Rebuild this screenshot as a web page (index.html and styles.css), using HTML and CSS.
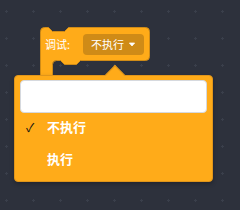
FILE: index.html
```html
<!DOCTYPE html>
<html lang="zh">
<head>
    <meta charset="UTF-8">
    <meta name="viewport" content="width=device-width, initial-scale=1.0">
    <title>调试</title>
    <link rel="stylesheet" href="styles.css">
</head>
<body>
    <div class="workspace">
        <!-- Control block (C-shaped) -->
        <div class="block">
            <svg class="block-shape" width="112" height="52" viewBox="0 0 112 52">
                <path d="M0.5,4.5 A4,4 0 0 1 4.5,0.5 H8.5 L12.5,4.5 H24.5 L28.5,0.5 H105.5 A4,4 0 0 1 109.5,4.5 V29.5 A4,4 0 0 1 105.5,33.5 H40.5 L36.5,37.5 H24.5 L20.5,33.5 H16.5 A4,4 0 0 0 12.5,37.5 V52 H0.5 Z"
                      fill="#ffab19" stroke="#cf8b17" stroke-width="1"/>
            </svg>
            <div class="block-head">
                <span class="block-label">调试:</span>
                <span class="field">
                    不执行
                    <svg class="field-arrow" width="8" height="5" viewBox="0 0 8 5">
                        <path d="M0.5,0.5 H7.5 L4,4.5 Z" fill="#fff" stroke="#fff" stroke-linejoin="round"/>
                    </svg>
                </span>
            </div>
        </div>

        <!-- Open dropdown menu -->
        <div class="dropdown">
            <input type="text" class="dropdown-search">
            <div class="menu-item">
                <span class="check">✓</span>
                <span>不执行</span>
            </div>
            <div class="menu-item">
                <span class="check"></span>
                <span>执行</span>
            </div>
        </div>
    </div>
</body>
</html>
```

FILE: styles.css
```css
/* Workspace */
body {
    margin: 0;
    font-family: "Noto Sans CJK SC", "DejaVu Sans", sans-serif;
    background: #2d313c;
}

.workspace {
    position: relative;
    width: 240px;
    height: 210px;
    overflow: hidden;
    background-color: #2d313c;
    background-image: radial-gradient(circle, #3a3f4b 1px, transparent 1.2px);
    background-size: 27px 27px;
    background-position: -7px -2px;
}

/* Block */
.block {
    position: absolute;
    left: 40px;
    top: 27px;
    width: 112px;
    height: 52px;
}

.block-shape {
    position: absolute;
    left: 0;
    top: 0;
}

.block-head {
    position: relative;
    display: flex;
    align-items: center;
    height: 34px;
    padding-left: 5px;
    color: #fff;
    font-size: 11px;
}

.block-label {
    width: 38px;
}

.field {
    display: flex;
    align-items: center;
    box-sizing: border-box;
    width: 61px;
    height: 21px;
    padding: 0 9px 0 8px;
    background: #cf8b17;
    border-radius: 4px;
    white-space: nowrap;
}

.field-arrow {
    margin-left: 5px;
}

/* Dropdown */
.dropdown {
    position: absolute;
    left: 14px;
    top: 75px;
    width: 199px;
    height: 107px;
    box-sizing: border-box;
    padding: 4px 5px 10px 5px;
    background: #ffab19;
    border: 1px solid #e0951a;
    border-radius: 4px;
    box-shadow: 0 2px 4px rgba(0, 0, 0, 0.25);
}

.dropdown::before {
    content: "";
    position: absolute;
    left: 93px;
    top: -8px;
    width: 14px;
    height: 14px;
    background: #ffab19;
    border-top: 1px solid #e0951a;
    border-left: 1px solid #e0951a;
    box-sizing: border-box;
    transform: rotate(45deg);
}

.dropdown-search {
    position: relative;
    display: block;
    box-sizing: border-box;
    width: 100%;
    height: 33px;
    margin: 0;
    background: #fff;
    border: 1px solid #d6d9de;
    border-radius: 4px;
    outline: none;
}

.menu-item {
    display: flex;
    align-items: center;
    height: 26px;
    margin-top: 6px;
    padding-left: 6px;
    color: #fff;
    font-size: 13px;
    font-weight: bold;
}

.menu-item:first-of-type {
    margin-top: 0;
}

.check {
    width: 21px;
    color: #111;
    font-size: 12px;
    font-weight: normal;
}
```
